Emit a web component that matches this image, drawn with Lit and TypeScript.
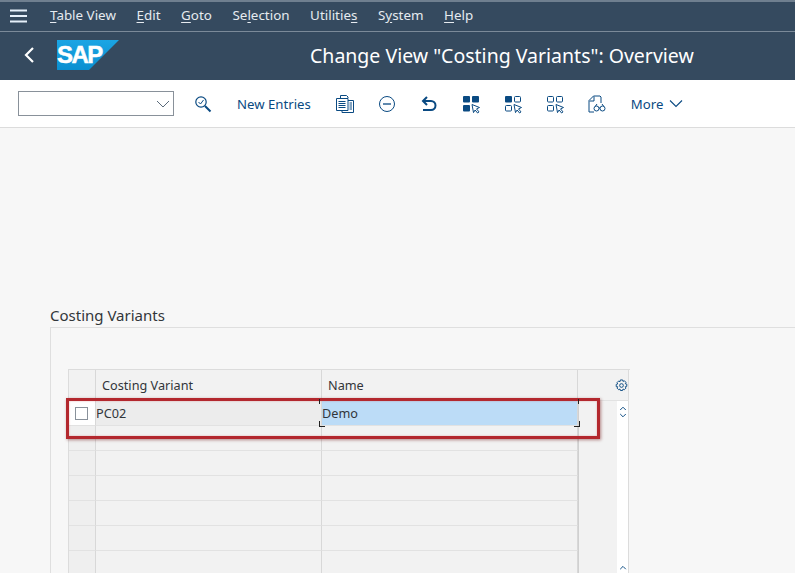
import { LitElement, html, css, svg } from 'lit';
import { customElement } from 'lit/decorators.js';

const menus = [
  ['', 'T', 'able View'],
  ['', 'E', 'dit'],
  ['', 'G', 'oto'],
  ['Se', 'l', 'ection'],
  ['Utilitie', 's', ''],
  ['S', 'y', 'stem'],
  ['', 'H', 'elp'],
];

const cursor = svg`<path d="M11 10.500l7.500 3-3 1.400 2.500 3-1.400 1.100-2.500-3-1.600 2.600z" fill="#fff" stroke="#0a4a82" stroke-width="1"/>`;

function tiles(filled: boolean[]) {
  const pos = [[2, 2], [11, 2], [2, 11]];
  return html`<svg width="20" height="20" viewBox="0 0 20 20">
    ${pos.map(([x, y], i) => svg`<rect x=${x + (filled[i] ? 0 : .5)} y=${y + (filled[i] ? 0 : .5)}
      width=${filled[i] ? 7 : 6} height=${filled[i] ? 6.5 : 5.5} rx="1"
      fill=${filled[i] ? '#0a4a82' : 'none'} stroke=${filled[i] ? 'none' : '#0a4a82'}/>`)}
    ${cursor}
  </svg>`;
}

@customElement('app-root')
export class AppRoot extends LitElement {
  static styles = css`
    :host {
      display: block; position: relative;
      width: 795px; height: 573px; overflow: hidden;
      background: #f7f7f7; color: #32363a;
      font-family: "Noto Sans", "Open Sans", sans-serif;
    }
    .menubar {
      display: flex; align-items: center; height: 29px;
      background: #354a5f; border-top: 2px solid #6f7f8f; border-bottom: 1px solid #7b8a99;
      color: #e6ebf0; font-size: 13.4px;
    }
    .burger { width: 50px; display: flex; justify-content: center; padding-right: 13px; box-sizing: border-box; margin-bottom: 2px; }
    .menu { display: flex; gap: 20.6px; margin-bottom: 3px; }
    .menu u { text-underline-offset: 2px; }
    .titlebar {
      display: flex; align-items: center; height: 48px; box-sizing: border-box; padding-bottom: 2px;
      background: #354a5f; color: #fff;
    }
    .back { width: 57px; padding-left: 23px; box-sizing: border-box; display: flex; }
    .logo { width: 62px; height: 30px; display: block; }
    .title { margin-left: 191px; font-size: 19.5px; white-space: nowrap; }
    .toolbar {
      display: flex; align-items: center; height: 47px; padding-left: 18px;
      background: #fff; border-bottom: 1px solid #dcdcdc; color: #0a4a82;
    }
    .combo {
      width: 156px; height: 25px; box-sizing: border-box; margin-right: 8px;
      border: 1px solid #89919a; background: #fff;
      display: flex; align-items: center; justify-content: flex-end; padding-right: 2px;
    }
    .tool { width: 42px; display: flex; justify-content: center; align-items: center; }
    .txt { padding: 0 13px; font-size: 13.2px; white-space: nowrap; }
    .more { display: flex; align-items: center; gap: 6px; }
    .heading { margin: 177px 0 0 50px; font-size: 15px; line-height: 20px; }
    .group {
      margin: 2px 0 0 50px; padding: 41px 0 0 17px; height: 300px;
      border: 1px solid #dfdfdf; border-right: 0; background: #f7f7f7;
    }
    .table {
      display: grid; width: 561px;
      grid-template-columns: 27px 226px 256px 39px 12px;
      grid-template-rows: 31px repeat(7, 25px);
      border-top: 1px solid #dcdcdc; border-left: 1px solid #dcdcdc;
      font-size: 12.7px;
    }
    .cell {
      box-sizing: border-box; background: #f2f2f2;
      border-right: 1px solid #d8d8d8; border-bottom: 1px solid #e2e2e2;
      display: flex; align-items: center; white-space: nowrap;
    }
    .head { padding-left: 6px; border-bottom: 1px solid #dcdcdc; }
    .sel { background: #efefef; }
    .sel.first { background: #fff; padding-left: 6px; }
    .check { width: 13px; height: 13px; box-sizing: border-box; border: 1px solid #89919a; background: #fff; }
    .key { background: #ececec; }
    .marked { background: #bcdcf7; }
    .gutter { grid-column: 4; border-right: 0; border-left: 1px solid #d0d0d0; border-bottom: 0; }
    .scroll {
      grid-column: 5; background: #fff; border: 0; border-right: 1px solid #dcdcdc;
      flex-direction: column; justify-content: space-between; padding: 3px 0 4px;
    }
    .settings { grid-column: 4 / span 2; border-right: 1px solid #dcdcdc; justify-content: flex-end; }
    .redbox {
      position: absolute; left: 66px; top: 398px; width: 534px; height: 41px; box-sizing: border-box;
      border: 3px solid #b3282e; box-shadow: 1px 1px 3px rgba(100, 0, 0, .45), inset 0 0 2px rgba(200, 60, 60, .4);
    }
    .tick { position: absolute; width: 5px; height: 5px; border: 0 solid #222; }
    .tl { left: 319px; top: 399px; width: 0; border-left-width: 1px; }
    .tr { left: 578px; top: 399px; width: 0; border-left-width: 1px; }
    .bl { left: 319px; top: 421px; border-left-width: 1px; border-bottom-width: 1px; }
    .br { left: 574px; top: 421px; border-right-width: 1px; border-bottom-width: 1px; }
  `;

  render() {
    const rows = [1, 2, 3, 4, 5, 6];
    return html`
      <div class="menubar">
        <div class="burger">
          <svg width="17" height="14" viewBox="0 0 17 14"><path d="M0 1.500h17M0 7h17M0 12.500h17" stroke="#e6f0fa" stroke-width="2"/></svg>
        </div>
        <div class="menu">
          ${menus.map(([a, u, b]) => html`<span>${a}<u>${u}</u>${b}</span>`)}
        </div>
      </div>
      <div class="titlebar">
        <div class="back">
          <svg width="12" height="18" viewBox="0 0 12 18"><path d="M10 2L3 9l7 7" fill="none" stroke="#fff" stroke-width="2.200"/></svg>
        </div>
        <svg class="logo" viewBox="0 0 62 30">
          <defs><linearGradient id="sap" x1="0" y1="0" x2="0" y2="1"><stop offset="0" stop-color="#1ba5e4"/><stop offset="1" stop-color="#0a8fd0"/></linearGradient></defs>
          <polygon points="0,0 62,0 32,30 0,30" fill="url(#sap)"/>
          <text x="0" y="23" font-family="Liberation Sans" font-weight="700" font-size="24" letter-spacing="-1.500" stroke="#fff" stroke-width=".5" fill="#fff">SAP</text>
        </svg>
        <div class="title">Change View "Costing Variants": Overview</div>
      </div>
      <div class="toolbar">
        <div class="combo">
          <svg width="16" height="10" viewBox="0 0 16 10"><path d="M2 2l6 6 6-6" fill="none" stroke="#5a6a7a" stroke-width="1"/></svg>
        </div>
        <div class="tool">
          <svg width="18" height="18" viewBox="0 0 18 18">
            <circle cx="7" cy="7" r="5.200" fill="none" stroke="#0a4a82" stroke-width="1.200"/>
            <path d="M11 11l5.500 5.500" stroke="#0a4a82" stroke-width="2"/>
            <path d="M4.500 7l2 2 3-4" fill="none" stroke="#0a4a82"/>
          </svg>
        </div>
        <div class="txt">New Entries</div>
        <div class="tool">
          <svg width="18" height="18" viewBox="0 0 18 18" fill="none" stroke="#0a4a82">
            <path d="M4.500 3V.5h6l1.500 1.500v1M.5 3.500h11.500v12H.5z"/>
            <path d="M12 5.500h5.500v12H6v-2"/>
            <path d="M2.500 6.500h7M2.500 8.500h7M2.500 10.500h7M2.500 12.500h7M13.500 8h2.500M13.500 10h2.500M13.500 12h2.500M13.500 14h2.500"/>
          </svg>
        </div>
        <div class="tool">
          <svg width="18" height="18" viewBox="0 0 18 18" fill="none" stroke="#0a4a82"><circle cx="9" cy="9" r="7.500"/><path d="M5 9h8" stroke-width="1.300"/></svg>
        </div>
        <div class="tool">
          <svg width="18" height="18" viewBox="0 0 18 18" fill="none" stroke="#0a4a82" stroke-width="2"><path d="M7 2L3 6l4 4"/><path d="M3 6h8a4 4 0 0 1 0 9H3"/></svg>
        </div>
        <div class="tool">${tiles([true, true, true])}</div>
        <div class="tool">${tiles([true, false, false])}</div>
        <div class="tool">${tiles([false, false, false])}</div>
        <div class="tool">
          <svg width="18" height="18" viewBox="0 0 18 18" fill="none" stroke="#0a4a82">
            <path d="M6 17H1V5.500L5.500 1H12l1 1v6"/><path d="M1.500 6H6V1.500"/>
            <circle cx="8.500" cy="13.500" r="2.500"/><circle cx="14.500" cy="13.500" r="2.500"/>
            <path d="M11 13h1M7.500 11l1.500-2M15.500 11L14 9"/>
          </svg>
        </div>
        <div class="txt more">More
          <svg width="14" height="9" viewBox="0 0 14 9"><path d="M1 1.500l6 6 6-6" fill="none" stroke="#0a4a82" stroke-width="1.100"/></svg>
        </div>
      </div>
      <div class="heading">Costing Variants</div>
      <div class="group">
        <div class="table">
          <div class="cell"></div>
          <div class="cell head">Costing Variant</div>
          <div class="cell head">Name</div>
          <div class="cell settings">
            <svg width="13" height="13" viewBox="0 0 14 14" fill="none" stroke="#0a4a82">
              <circle cx="7" cy="7" r="2"/>
              <path d="M5.800 1h2.400l.4 1.600 1.500-.7 1.700 1.700-.7 1.500 1.600.4v2.400l-1.600.4.7 1.500-1.700 1.700-1.500-.7-.4 1.600H5.800l-.4-1.600-1.500.7-1.700-1.700.7-1.500L1.300 8.200V5.800l1.600-.4-.7-1.500 1.700-1.700 1.500.7z"/>
            </svg>
          </div>
          <div class="cell sel first"><div class="check"></div></div>
          <div class="cell key">PC02</div>
          <div class="cell marked">Demo</div>
          <div class="cell gutter" style="grid-row: 2 / span 7"></div>
          <div class="cell scroll" style="grid-row: 2 / span 7">
            <svg width="8" height="16" viewBox="0 0 10 16" fill="none" stroke="#0a4a82" stroke-width="1.200">
              <path d="M1.500 5.500L5 2l3.500 3.500M1.500 10.500L5 14l3.500-3.500"/>
            </svg>
            <svg width="8" height="8" viewBox="0 0 10 8" fill="none" stroke="#0a4a82" stroke-width="1.200">
              <path d="M1.500 5.500L5 2l3.500 3.500"/>
            </svg>
          </div>
          ${rows.map(() => html`<div class="cell sel"></div><div class="cell"></div><div class="cell"></div>`)}
        </div>
      </div>
      <div class="redbox"></div>
      <div class="tick tl"></div><div class="tick tr"></div><div class="tick bl"></div><div class="tick br"></div>
    `;
  }
}
